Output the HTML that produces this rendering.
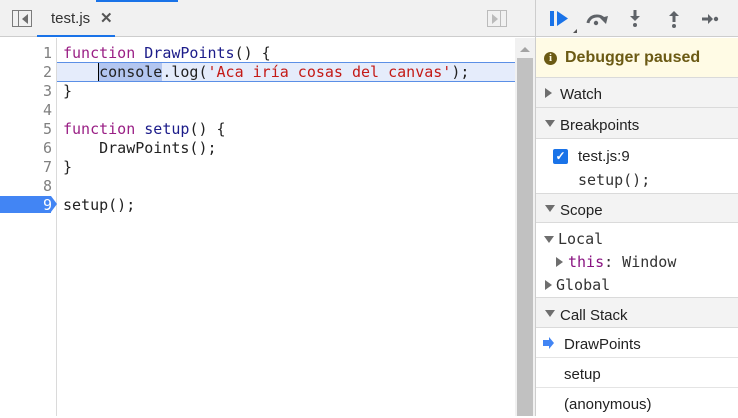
<!DOCTYPE html>
<html><head><meta charset="utf-8"><style>
*{margin:0;padding:0;box-sizing:border-box}
body{width:738px;height:416px;overflow:hidden;background:#fff;font-family:"Segoe UI","Liberation Sans",sans-serif;position:relative}
.a{position:absolute}
.mono{font-family:"DejaVu Sans Mono","Liberation Mono",monospace}
.code{font-size:15px;line-height:19px;color:#222;white-space:pre}
.ln{position:absolute;left:0;width:52px;text-align:right;font-size:15px;color:#808080;line-height:19px}
.k{color:#9a1f85}.f{color:#1c1c8a}.s{color:#c41a16}.p{color:#333}
.sec{position:absolute;left:536px;right:0;background:#f3f3f3;border-bottom:1px solid #dadada;font-size:15px;color:#222;padding-left:24px}
.sec span{position:relative;top:2px}
.tri{position:absolute;left:9px;width:0;height:0}
.down{border-left:5px solid transparent;border-right:5px solid transparent;border-top:7px solid #6e6e6e}
.right{border-top:5px solid transparent;border-bottom:5px solid transparent;border-left:7px solid #6e6e6e}
.row{position:absolute;left:536px;right:0;border-bottom:1px solid #e4e4e4;font-size:15px;color:#222;padding-left:28px}
.row span{position:relative;top:2px}
</style></head><body>
<div class="a" style="left:0;top:0;width:535px;height:37px;background:#f1f1f1;border-bottom:1px solid #cdcdcd"></div>
<div class="a" style="left:96px;top:0;width:82px;height:2px;background:#1a73e8"></div>
<div class="a" style="left:12px;top:10px;width:20px;height:17px;border:1px solid #7b7b7b"></div>
<div class="a" style="left:18px;top:10px;width:1px;height:17px;background:#7b7b7b"></div>
<div class="a" style="left:22px;top:14px;border-top:5px solid transparent;border-bottom:5px solid transparent;border-right:6px solid #6e6e6e"></div>
<div class="a" style="left:51px;top:10px;font-size:15px;color:#333">test.js</div>
<div class="a" style="left:100px;top:9px;font-size:15px;color:#555;font-weight:bold">✕</div>
<div class="a" style="left:37px;top:35px;width:78px;height:2px;background:#1a73e8"></div>
<div class="a" style="left:487px;top:10px;width:20px;height:17px;border:1px solid #bbb"></div>
<div class="a" style="left:500px;top:10px;width:1px;height:17px;background:#bbb"></div>
<div class="a" style="left:492px;top:14px;border-top:5px solid transparent;border-bottom:5px solid transparent;border-left:6px solid #bbb"></div>
<div class="a" style="left:56px;top:38px;width:1px;height:378px;background:#dadada"></div>
<div class="a" style="left:57px;top:62px;width:458px;height:20px;background:#e5ecfb;border-top:1px solid #5b8fe6;border-bottom:1px solid #5b8fe6"></div>
<div class="a" style="left:99px;top:63px;width:63px;height:18px;background:#b3c6f0"></div>
<div class="a" style="left:98px;top:63px;width:1px;height:18px;background:#000"></div>
<div class="a" style="left:0;top:196px;width:51px;height:17px;background:#4285f4"></div>
<div class="a" style="left:51px;top:196px;border-top:8.5px solid transparent;border-bottom:8.5px solid transparent;border-left:6px solid #4285f4"></div>
<div class="mono">
<div class="ln" style="top:44px">1</div><div class="ln" style="top:63px">2</div><div class="ln" style="top:82px">3</div><div class="ln" style="top:101px">4</div><div class="ln" style="top:120px">5</div><div class="ln" style="top:139px">6</div><div class="ln" style="top:158px">7</div><div class="ln" style="top:177px">8</div><div class="ln" style="top:196px;color:#fff">9</div>
<div class="a code" style="left:63px;top:44px"><span class="k">function</span> <span class="f">DrawPoints</span>() {
    console.log(<span class="s">'Aca iría cosas del canvas'</span>);
}

<span class="k">function</span> <span class="f">setup</span>() {
    DrawPoints();
}

setup();</div>
</div>
<div class="a" style="left:515px;top:38px;width:20px;height:378px;background:#f1f1f1"></div>
<div class="a" style="left:517px;top:58px;width:16px;height:358px;background:#c1c1c1"></div>
<div class="a" style="left:520px;top:47px;border-left:5px solid transparent;border-right:5px solid transparent;border-bottom:5px solid #a3a3a3"></div>
<div class="a" style="left:535px;top:0;width:1px;height:416px;background:#cdcdcd"></div>
<div class="a" style="left:536px;top:0;width:202px;height:37px;background:#f1f1f1;border-bottom:1px solid #cdcdcd"></div>
<svg class="a" style="left:536px;top:0" width="202" height="37">
<rect x="14" y="11" width="4" height="15" fill="#1a73e8"/><path d="M21 11 L32 18.5 L21 26Z" fill="#1a73e8"/><path d="M37 33 L41 29 L41 33Z" fill="#555"/>
<path d="M52 23 A9 8 0 0 1 68 19" stroke="#5f6368" stroke-width="3" fill="none"/><path d="M64 18 L72 16 L70 24Z" fill="#5f6368"/><circle cx="60" cy="23" r="2.2" fill="#5f6368"/>
<path d="M99 10 V19" stroke="#5f6368" stroke-width="3"/><path d="M94 16 L104 16 L99 21Z" fill="#5f6368"/><circle cx="99" cy="25" r="2" fill="#5f6368"/>
<path d="M138 15 V22" stroke="#5f6368" stroke-width="3"/><path d="M133 16 L143 16 L138 11Z" fill="#5f6368"/><circle cx="138" cy="26" r="2" fill="#5f6368"/>
<path d="M166 19 H174" stroke="#5f6368" stroke-width="3"/><path d="M172 14 L177 19 L172 24Z" fill="#5f6368"/><circle cx="180" cy="19" r="2.2" fill="#5f6368"/>
</svg>
<div class="a" style="left:536px;top:38px;width:202px;height:40px;background:#fffbe5;border-bottom:1px solid #dadada"></div>
<div class="a" style="left:544px;top:52px;width:13px;height:13px;border-radius:50%;background:#6b5a14;color:#fffbe5;font-size:11px;font-weight:bold;text-align:center;line-height:13px;font-family:'Liberation Serif',serif">i</div>
<div class="a" style="left:565px;top:49px;font-size:16px;font-weight:bold;color:#6b5a14">Debugger paused</div>
<div class="sec" style="top:78px;height:30px;line-height:30px"><div class="tri right" style="top:10px"></div><span>Watch</span></div>
<div class="sec" style="top:108px;height:31px;line-height:31px"><div class="tri down" style="top:12px"></div><span>Breakpoints</span></div>
<div class="a" style="left:553px;top:149px;width:15px;height:15px;background:#1a73e8;border-radius:2px;color:#fff;font-size:12px;text-align:center;line-height:15px;font-weight:bold">✓</div>
<div class="a" style="left:578px;top:148px;font-size:15px;color:#222">test.js:9</div>
<div class="a mono" style="left:578px;top:171px;font-size:15px;color:#333">setup();</div>
<div class="sec" style="top:193px;height:30px;line-height:30px;border-top:1px solid #dadada"><div class="tri down" style="top:11px"></div><span>Scope</span></div>
<div class="a mono" style="left:558px;top:230px;font-size:15px;color:#333">Local</div><div class="tri down a" style="left:544px;top:236px"></div>
<div class="a mono" style="left:568px;top:253px;font-size:15px;color:#333"><span style="color:#881280">this</span>: Window</div><div class="tri right a" style="left:556px;top:257px"></div>
<div class="a mono" style="left:556px;top:276px;font-size:15px;color:#333">Global</div><div class="tri right a" style="left:545px;top:280px"></div>
<div class="sec" style="top:297px;height:31px;line-height:31px;border-top:1px solid #dadada"><div class="tri down" style="top:12px"></div><span>Call Stack</span></div>
<div class="row" style="top:328px;height:30px;line-height:30px"><span>DrawPoints</span></div>
<svg class="a" style="left:543px;top:337px" width="12" height="12"><path d="M0 3 H6 V0 L11 6 L6 12 V9 H0Z" fill="#4285f4"/></svg>
<div class="row" style="top:358px;height:30px;line-height:30px"><span>setup</span></div>
<div class="row" style="top:388px;height:30px;line-height:30px;border:none"><span>(anonymous)</span></div>
</body></html>
